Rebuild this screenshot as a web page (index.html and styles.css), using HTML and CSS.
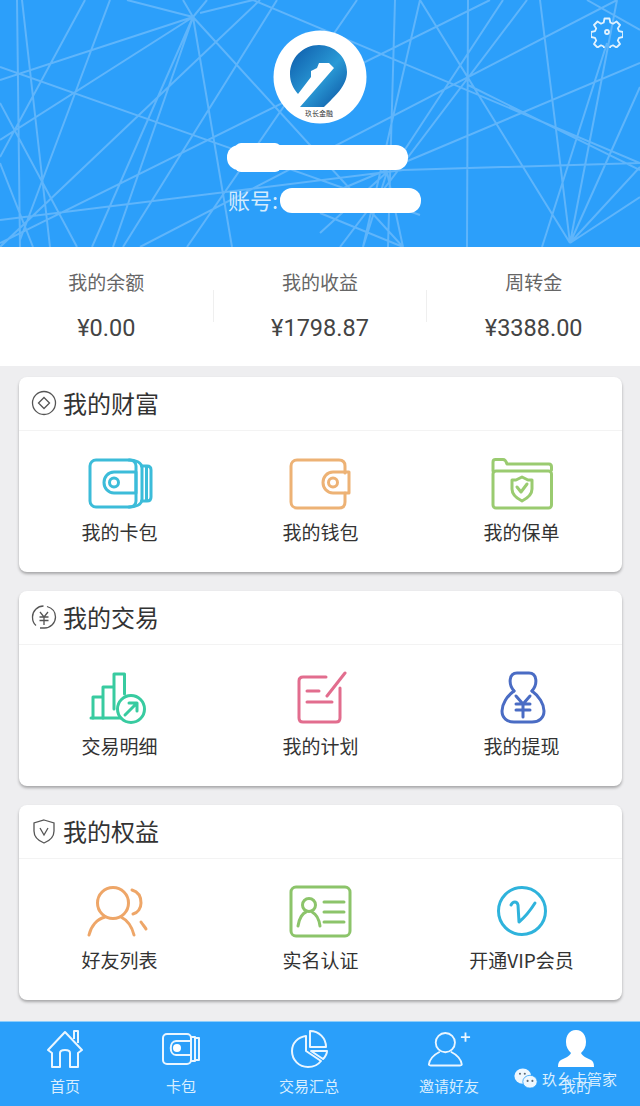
FILE: index.html
```html
<!DOCTYPE html>
<html lang="zh">
<head>
    <meta charset="UTF-8">
    <title>我的</title>
    <link rel="stylesheet" href="styles.css">
</head>
<body>
<div class="page">
    <header class="profile">
        <svg class="web" viewBox="0 0 640 247">
            <path d="M17 0L20 247M22 0L50 247M85 0L0 157M110 0L20 240M193 17L0 80M193 17L0 140M193 17L92 247M193 17L113 247M193 17L232 247M193 17L403 247M127 0L193 17M200 13L253 0M183 0L193 17M207 0L193 17M260 0L0 247M277 0L123 247M0 67L420 215M0 103L77 247M0 163L33 247M490 0L0 243M0 220L403 170L640 163M640 63L410 160L320 198M357 0L187 247M420 0L570 243M540 0L570 243M617 0L570 243M395 0L388 247M468 0L467 247M420 0L363 247M503 0L400 157M527 0L340 247M253 0L640 163M587 0L640 30M617 0L140 247M640 197L570 243M640 87L570 243M640 167L570 243M387 172L403 247M387 172L363 247M387 172L320 233M320 213L403 247M607 43L542 247M468 85L640 170"/>
        </svg>
        <svg class="gear" viewBox="0 0 32 32">
            <path d="M13.500 2.500h5l.8 4 2.700 1.200 3.500-2.200 3.500 3.500-2.200 3.500 1.200 2.700 4 .8v5l-4 .8-1.200 2.700 2.200 3.500-3.500 3.500-3.500-2.200-2.700 1.200-.8 4h-5l-.8-4-2.700-1.200-3.500 2.200-3.500-3.500 2.200-3.500-1.200-2.700-4-.8v-5l4-.8 1.200-2.700-2.200-3.500 3.500-3.500 3.500 2.200 2.700-1.200z"/>
            <circle cx="16" cy="16" r="2"/>
        </svg>
        <svg class="logo" viewBox="0 0 94 94">
            <defs>
                <linearGradient id="logoBlue" x1="0" y1="0" x2="1" y2="1">
                    <stop offset="0" stop-color="#0c58a8"/>
                    <stop offset=".55" stop-color="#2a9ad6"/>
                    <stop offset="1" stop-color="#0a4f9e"/>
                </linearGradient>
            </defs>
            <circle cx="47" cy="47" r="46.500" fill="#fff"/>
            <path d="M27 77H51C62 66 74 56 74 42C74 27 61 15 46 15C30 15 17 28 17 44C17 52 20 58 25 64L38 47V41L44 38L46 33H56L61 38Z" fill="url(#logoBlue)"/>
            <text x="46" y="86" class="logo-name">玖长金融</text>
        </svg>
        <div class="blot blot-name"></div>
        <div class="account">
            <span>账号:</span>
            <div class="blot blot-account"></div>
        </div>
    </header>

    <section class="stats">
        <div class="stat"><p class="stat-label">我的余额</p><p class="stat-value">¥0.00</p></div>
        <i class="stat-sep"></i>
        <div class="stat"><p class="stat-label">我的收益</p><p class="stat-value">¥1798.87</p></div>
        <i class="stat-sep"></i>
        <div class="stat"><p class="stat-label">周转金</p><p class="stat-value">¥3388.00</p></div>
    </section>

    <main class="cards">
        <section class="card">
            <h2 class="card-title">
                <svg class="title-icon" viewBox="0 0 26 26"><circle cx="13" cy="13" r="11.500"/><path d="M13 7.500L18.500 13L13 18.500L7.500 13Z"/></svg>
                我的财富
            </h2>
            <div class="items">
                <div class="item">
                    <svg class="item-icon blue" viewBox="0 0 70 54">
                        <rect x="5" y="3" width="46" height="47" rx="6"/>
                        <path d="M44 3C50 3 57 5 57 11V42C57 48 50 50 44 50"/>
                        <path d="M57 9H62C64.500 9 66 10.500 66 13V40C66 42.500 64.500 44 62 44H57M61.500 9V44"/>
                        <path d="M51 15H29C23 15 19 20 19 25.500C19 31 23 36 29 36H51Z"/>
                        <circle cx="29" cy="25.500" r="4.500"/>
                    </svg>
                    <span class="item-name">我的卡包</span>
                </div>
                <div class="item">
                    <svg class="item-icon orange" viewBox="0 0 70 54">
                        <path d="M59 16V9C59 5.500 57 3 53 3H11C7.500 3 5 5.500 5 9V45C5 48.500 7.500 51 11 51H53C57 51 59 48.500 59 45V36"/>
                        <path d="M63 15H47C41 15 37 20 37 25.500C37 31 41 36 47 36H63Z"/>
                        <circle cx="47" cy="25.500" r="4.500"/>
                    </svg>
                    <span class="item-name">我的钱包</span>
                </div>
                <div class="item">
                    <svg class="item-icon green" viewBox="0 0 70 54">
                        <path d="M6 14V5C6 3.500 7 2.500 8.500 2.500H16C18 2.500 19 3.500 20 7H62C63.500 7 64.500 8 64.500 10V13"/>
                        <rect x="6" y="14" width="58.500" height="37" rx="3"/>
                        <path d="M35 20L41 23L45 23V32C45 38 41 41 35 44C29 41 25 38 25 32V23L29 23Z"/>
                        <path d="M30 30L34 35L40 27"/>
                    </svg>
                    <span class="item-name">我的保单</span>
                </div>
            </div>
        </section>

        <section class="card">
            <h2 class="card-title">
                <svg class="title-icon" viewBox="0 0 26 26"><path d="M5 21.500C2.500 19.500 1.500 16.500 1.500 13C1.500 7 6.500 2 12.500 2M16 2.500C21 4 24.500 8 24.500 13C24.500 19 19.500 24 13.500 24H9"/><path d="M9 8L13 13L17 8M8.500 13H17.500M8.500 16.500H17.500M13 13V21"/></svg>
                我的交易
            </h2>
            <div class="items">
                <div class="item">
                    <svg class="item-icon teal" viewBox="0 0 70 54">
                        <path d="M8 47V26H18V47M18 47V16H29V38M29 23V3H39.500V23"/>
                        <path d="M6 47H36"/>
                        <circle cx="46" cy="38" r="13.500"/>
                        <path d="M40 44L52 32M44 32H52V40"/>
                    </svg>
                    <span class="item-name">交易明细</span>
                </div>
                <div class="item">
                    <svg class="item-icon pink" viewBox="0 0 70 54">
                        <path d="M40 6H17C14.500 6 13 7.500 13 10V47C13 49.500 14.500 51 17 51H50C52.500 51 54 49.500 54 47V17"/>
                        <path d="M41 25L59 2"/>
                        <path d="M21 20H33M21 31H46"/>
                    </svg>
                    <span class="item-name">我的计划</span>
                </div>
                <div class="item">
                    <svg class="item-icon indigo" viewBox="0 0 70 54">
                        <path d="M27 20C21 13 22 2 30 2H42C50 2 51 13 45 20"/>
                        <path d="M27 20C20 25 15 33 15 40C15 47 20 51 27 51H45C52 51 57 47 57 40C57 33 52 25 45 20"/>
                        <path d="M29 25L36 33L43 25M29 33H43M29 39H43M36 33V46"/>
                    </svg>
                    <span class="item-name">我的提现</span>
                </div>
            </div>
        </section>

        <section class="card">
            <h2 class="card-title">
                <svg class="title-icon" viewBox="0 0 26 26"><path d="M13 2L23 5V13C23 19 18 23 13 25C8 23 3 19 3 13V5Z"/><path d="M9 10L13 17L17 10"/></svg>
                我的权益
            </h2>
            <div class="items">
                <div class="item">
                    <svg class="item-icon orange2" viewBox="0 0 70 54">
                        <circle cx="28" cy="18" r="15.500"/>
                        <path d="M4 50C6 41 12 34 20 32M36 32C44 36 47 42 49 50"/>
                        <path d="M47 5C54 7 56 12 56 18C56 23 53 28 48 29M56 37C58 40 60 42 61 44"/>
                    </svg>
                    <span class="item-name">好友列表</span>
                </div>
                <div class="item">
                    <svg class="item-icon green2" viewBox="0 0 70 54">
                        <rect x="5" y="2" width="59" height="49" rx="5"/>
                        <circle cx="23" cy="20" r="6.500"/>
                        <path d="M12 41C13 33 17 28 20 27M26 27C30 29 33 34 34 41"/>
                        <path d="M38 17H58M38 27H58M38 37H58"/>
                    </svg>
                    <span class="item-name">实名认证</span>
                </div>
                <div class="item">
                    <svg class="item-icon cyan" viewBox="0 0 70 54">
                        <circle cx="35" cy="26" r="23.500"/>
                        <path d="M24 20C26 16 30 16 31 20L32 37C38 32 43 26 48 18"/>
                    </svg>
                    <span class="item-name">开通VIP会员</span>
                </div>
            </div>
        </section>
    </main>

    <nav class="tabs">
        <div class="tab">
            <svg viewBox="0 0 40 40"><path d="M3 21L20 3L37 21L33 24V38H25V24C25 20 15 20 15 24V38H7V24Z"/><path d="M29 10V2H33V14"/></svg>
            <span>首页</span>
        </div>
        <div class="tab">
            <svg viewBox="0 0 40 40"><rect x="2" y="5" width="28" height="30" rx="4"/><path d="M30 8H34V32H30M34 9H38V31H34"/><path d="M30 12H15C8 12 8 26 15 26H30Z"/><circle cx="16" cy="19" r="4" class="solid"/></svg>
            <span>卡包</span>
        </div>
        <div class="tab">
            <svg viewBox="0 0 40 40"><path d="M17 7C9 8 3 14 3 22C3 31 10 38 19 38C24 38 29 36 32 32L17 22Z"/><path d="M21 2V18L37 18C37 9 30 2 21 2Z"/><path d="M22 22H38C38 25 36 28 34 30Z"/></svg>
            <span>交易汇总</span>
        </div>
        <div class="tab">
            <svg class="tab-wide" viewBox="0 0 48 40"><circle cx="20" cy="13" r="10.500"/><path d="M14 23C8 26 3 30 2 37C2 38 3 38 4 38H36C37 38 38 38 38 37C37 30 32 26 26 23"/><path d="M37 7H47M42 2V12"/></svg>
            <span>邀请好友</span>
        </div>
        <div class="tab">
            <svg viewBox="0 0 40 40"><path class="solid" d="M20 1C13 1 10 7 10 13C10 18 12 21 15 24C14 27 9 29 5 31C3 32 2 34 2 38H38C38 34 37 32 35 31C31 29 26 27 25 24C28 21 30 18 30 13C30 7 27 1 20 1Z"/></svg>
            <span>我的</span>
        </div>
        <div class="mark">
            <svg viewBox="0 0 30 26"><ellipse cx="11" cy="10" rx="10.500" ry="9.500"/><ellipse class="mark-front" cx="20" cy="17" rx="9" ry="8"/><circle class="mark-dot" cx="17" cy="16" r="1.300"/><circle class="mark-dot" cx="23" cy="16" r="1.300"/><circle class="mark-dot" cx="7.500" cy="7" r="1.300"/><circle class="mark-dot" cx="13.500" cy="7" r="1.300"/></svg>
            <span>玖幺卡管家</span>
        </div>
    </nav>
</div>
</body>
</html>
```
FILE: styles.css
```css
* {
    padding: 0;
    margin: 0;
    box-sizing: border-box;
}

body {
    width: 640px;
    height: 1106px;
    overflow: hidden;
    background: #eeeef0;
    font-family: "Noto Sans CJK SC", "Noto Sans", sans-serif;
}

.page {
    height: 1106px;
    display: flex;
    flex-direction: column;
}

/* top blue part */
.profile {
    height: 247px;
    flex: none;
    position: relative;
    display: flex;
    flex-direction: column;
    align-items: center;
    padding-top: 30px;
    background: #2c9ffa;
    overflow: hidden;
}

.web {
    position: absolute;
    left: 0;
    top: 0;
    width: 640px;
    height: 247px;
}

.web path {
    fill: none;
    stroke: #5fb5fb;
    stroke-width: 2;
}

.gear {
    position: absolute;
    right: 17px;
    top: 16px;
    width: 32px;
    height: 32px;
    fill: none;
    stroke: #e2f2fe;
    stroke-width: 1.800;
    stroke-linejoin: round;
}

.logo {
    position: relative;
    width: 94px;
    height: 94px;
    flex: none;
}

.logo-name {
    font-size: 7px;
    fill: #333;
    text-anchor: middle;
}

.blot {
    position: relative;
    background: #fff;
    border-radius: 12px;
    height: 25px;
}

.blot-name {
    width: 181px;
    margin: 21px 5px 0 0;
}

/* the smudge sticks out a little above and below */
.blot-name::before {
    content: "";
    position: absolute;
    left: 8px;
    top: -2px;
    width: 46px;
    height: 29px;
    background: #fff;
    border-radius: 6px;
}

.account {
    position: relative;
    display: flex;
    align-items: center;
    gap: 2px;
    margin: 18px 0 0 9px;
    font-size: 22px;
    line-height: 25px;
    color: #d4ebfd;
}

.account span {
    margin-top: -2px;
}

.blot-account {
    width: 141px;
}

/* three amounts */
.stats {
    height: 119px;
    flex: none;
    display: flex;
    align-items: flex-start;
    background: #fff;
}

.stat {
    flex: 1;
    padding-top: 22px;
    text-align: center;
}

.stat-sep {
    width: 1px;
    height: 32px;
    margin-top: 43px;
    background: #efefef;
}

.stat-label {
    font-size: 19px;
    line-height: 26px;
    color: #666;
}

.stat-value {
    margin-top: 18px;
    font-family: Roboto, "Noto Sans CJK SC", sans-serif;
    font-size: 23.500px;
    line-height: 30px;
    color: #444;
}

/* cards */
.cards {
    flex: 1;
    display: flex;
    flex-direction: column;
    gap: 19px;
    padding: 11px 18px 0 19px;
}

.card {
    height: 195px;
    background: #fff;
    border-radius: 8px;
    box-shadow: 0 2px 3px rgba(0, 0, 0, .3);
}

.card-title {
    height: 54px;
    display: flex;
    align-items: center;
    gap: 6px;
    padding: 0 0 2px 12px;
    border-bottom: 1px solid #f3f3f3;
    font-size: 24px;
    font-weight: 400;
    color: #333;
}

.title-icon {
    width: 26px;
    height: 26px;
    fill: none;
    stroke: #555;
    stroke-width: 1.300;
}

.items {
    display: grid;
    grid-template-columns: repeat(3, 1fr);
    padding-top: 26px;
}

.item {
    display: flex;
    flex-direction: column;
    align-items: center;
}

.item-icon {
    width: 70px;
    height: 54px;
    fill: none;
    stroke-width: 3;
    stroke-linecap: round;
    stroke-linejoin: round;
}

.item-name {
    margin-top: 8px;
    font-size: 19px;
    line-height: 26px;
    color: #333;
}

.blue { stroke: #3cbcd9; }
.orange { stroke: #edb275; }
.green { stroke: #9acb70; }
.teal { stroke: #38cba0; }
.pink { stroke: #e26d8e; }
.indigo { stroke: #4a6cc4; }
.orange2 { stroke: #eea668; }
.green2 { stroke: #8cc46a; }
.cyan { stroke: #2fb3dc; }

/* bottom bar */
.tabs {
    height: 85px;
    flex: none;
    position: relative;
    display: grid;
    grid-template-columns: 130px 102px 154px 126px 128px;
    background: #2a9ffa;
    border-top: 1px solid #8ccdfb;
}

.tab {
    display: flex;
    flex-direction: column;
    align-items: center;
    padding-top: 7px;
    font-size: 15px;
    line-height: 20px;
    color: #d9eefe;
}

.tab svg {
    height: 40px;
    width: 40px;
    margin-bottom: 7px;
    fill: none;
    stroke: #eaf6ff;
    stroke-width: 2;
    stroke-linejoin: round;
}

.tab svg.tab-wide {
    width: 44px;
}

.tab svg .solid {
    fill: #fff;
    stroke: none;
}

.mark {
    position: absolute;
    left: 514px;
    top: 45px;
    display: flex;
    align-items: center;
    gap: 4px;
    font-size: 15px;
    color: #d9eefe;
}

.mark svg {
    width: 24px;
    height: 23px;
    fill: #eef7fe;
}

.mark-front {
    stroke: #2a9ffa;
    stroke-width: 1;
}

.mark-dot {
    fill: #5a6a78;
}
```
